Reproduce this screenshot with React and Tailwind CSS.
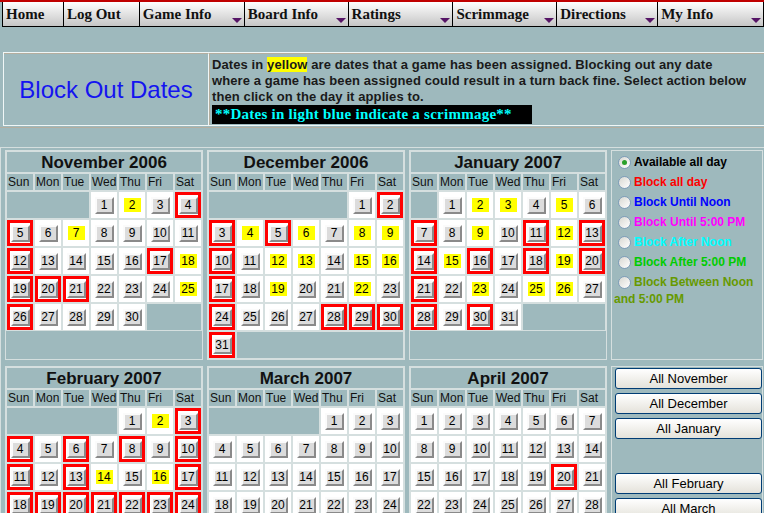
import React from "react";

// ------------------------------------------------------------
// DATA
// ------------------------------------------------------------
const NAV = [
  { label: "Home", w: "w-[61px]" },
  { label: "Log Out", w: "w-[76px]" },
  { label: "Game Info", w: "w-[105px]", drop: true },
  { label: "Board Info", w: "w-[104px]", drop: true },
  { label: "Ratings", w: "w-[105px]", drop: true },
  { label: "Scrimmage", w: "w-[104px]", drop: true },
  { label: "Directions", w: "w-[101px]", drop: true },
  { label: "My Info", w: "w-[106px]", drop: true },
];

const MONTHS_TOP = [
  {
    title: "November 2006",
    start: 3,
    days: 30,
    yellow: [2, 7, 18, 25],
    red: [4, 5, 12, 17, 19, 20, 21, 26],
  },
  {
    title: "December 2006",
    start: 5,
    days: 31,
    yellow: [4, 6, 8, 9, 12, 13, 15, 16, 19, 22],
    red: [2, 3, 5, 10, 17, 24, 28, 29, 30, 31],
  },
  {
    title: "January 2007",
    start: 1,
    days: 31,
    yellow: [2, 3, 5, 9, 12, 15, 19, 23, 25, 26],
    red: [7, 11, 13, 14, 16, 18, 20, 21, 28, 30],
  },
];

const MONTHS_BOTTOM = [
  {
    title: "February 2007",
    start: 4,
    days: 28,
    yellow: [2, 14, 16],
    red: [3, 4, 6, 8, 10, 11, 13, 17, 18, 19, 20, 21, 22, 23, 24],
  },
  { title: "March 2007", start: 4, days: 31, yellow: [], red: [] },
  { title: "April 2007", start: 0, days: 30, yellow: [], red: [20] },
];

const WEEK = ["Sun", "Mon", "Tue", "Wed", "Thu", "Fri", "Sat"];

const SPAN = {
  1: "col-span-1",
  2: "col-span-2",
  3: "col-span-3",
  4: "col-span-4",
  5: "col-span-5",
  6: "col-span-6",
};

const OPTIONS = [
  { label: "Available all day", color: "text-[#000000]", checked: true },
  { label: "Block all day", color: "text-[#ff0000]" },
  { label: "Block Until Noon", color: "text-[#0000ff]" },
  { label: "Block Until 5:00 PM", color: "text-[#ff00ff]" },
  { label: "Block After Noon", color: "text-[#00ffff]" },
  { label: "Block After 5:00 PM", color: "text-[#00cc00]" },
];

// ------------------------------------------------------------
// PIECES
// ------------------------------------------------------------
function DayCell({ d, yellow, red }) {
  return (
    <div
      className={`h-[26px] bg-white flex items-center justify-center ${
        red ? "border-[3px] border-[#ff0000]" : ""
      }`}
    >
      {yellow ? (
        <span className="w-[17px] h-[14px] bg-[#ffff00] text-[12px] leading-[14px] text-center text-black">
          {d}
        </span>
      ) : (
        <span className="w-[19px] h-[17px] bg-[#dcdcdc] border-2 border-t-[#fbfbfb] border-l-[#fbfbfb] border-r-[#8a8a8a] border-b-[#8a8a8a] text-[12px] leading-[13px] text-center text-black">
          {d}
        </span>
      )}
    </div>
  );
}

function Calendar({ title, start, days, yellow, red }) {
  const cells = [];
  if (start > 0) {
    cells.push(<div key="lead" className={`${SPAN[start]} h-[26px] bg-[#9eb9bd]`} />);
  }
  for (let d = 1; d <= days; d++) {
    cells.push(
      <DayCell key={d} d={d} yellow={yellow.includes(d)} red={red.includes(d)} />
    );
  }
  const rest = (start + days) % 7;
  if (rest > 0) {
    cells.push(<div key="tail" className={`${SPAN[7 - rest]} h-[26px] bg-[#9eb9bd]`} />);
  }

  return (
    <div className="border border-[#d5dfdf] bg-[#9eb9bd]">
      <div className="grid grid-cols-[repeat(7,26px)] gap-[2px] p-[1px] bg-[#d5dfdf]">
        <div className="col-span-7 h-[20px] bg-[#9eb9bd] text-center font-bold text-[17px] leading-[21px] text-[#111]">
          {title}
        </div>
        {WEEK.map((w) => (
          <div
            key={w}
            className="h-[16px] bg-[#9eb9bd] pl-[1px] text-[12px] leading-[16px] text-[#111] whitespace-nowrap"
          >
            {w}
          </div>
        ))}
        {cells}
      </div>
    </div>
  );
}

function Radio({ checked }) {
  return (
    <span className="inline-flex w-[13px] h-[13px] rounded-full border border-[#7f9db9] bg-gradient-to-br from-[#d8d8d2] to-white items-center justify-center shrink-0">
      {checked && <span className="w-[5px] h-[5px] rounded-full bg-[#2aa02a]" />}
    </span>
  );
}

function Btn({ children, className = "" }) {
  return (
    <div
      className={`w-[147px] h-[21px] ml-[3px] rounded-[3px] border border-[#003c74] bg-gradient-to-b from-white to-[#e4e2da] text-center text-[13px] leading-[19px] text-black ${className}`}
    >
      {children}
    </div>
  );
}

// ------------------------------------------------------------
// PAGE
// ------------------------------------------------------------
export default function App() {
  return (
    <div className="w-full h-[513px] overflow-hidden bg-[#9eb9bd] font-['Liberation_Sans',Arial,sans-serif]">
      {/* NAV */}
      <div className="border-t-2 border-[#c00000] pl-[2px]">
        <div className="flex border-l border-b border-black">
          {NAV.map((n) => (
            <div
              key={n.label}
              className={`relative ${n.w} h-[24px] border-r border-black bg-gradient-to-b from-white to-[#c6c6c6] pl-[3px] font-['Liberation_Serif',serif] font-bold text-[15px] leading-[24px] text-[#111]`}
            >
              {n.label}
              {n.drop && (
                <span className="absolute right-[2px] bottom-[3px] w-0 h-0 border-l-[5px] border-r-[5px] border-t-[5px] border-l-transparent border-r-transparent border-t-[#561566]" />
              )}
            </div>
          ))}
        </div>
      </div>

      {/* HEADER */}
      <div className="mt-[25px] ml-[3px] flex h-[74px] border-t border-l border-b border-[#f0f7f7]">
        <div className="w-[205px] border-t border-[#b5ae9f] border-r border-r-[#f0f7f7] flex items-center justify-center text-[24px] text-[#1414f0]">
          Block Out Dates
        </div>
        <div className="flex-1 border-t border-l border-[#b5ae9f] pl-[2px] pt-[3px]">
          <p className="w-[542px] text-[13px] font-bold tracking-[0.1px] leading-[16px] text-[#1a1a1a]">
            Dates in <span className="bg-[#ffff00]">yellow</span> are dates that a game has been
            assigned. Blocking out any date where a game has been assigned could result in a turn
            back fine. Select action below then click on the day it applies to.
          </p>
          <div className="w-[320px] h-[19px] bg-black pl-[3px] font-['Liberation_Serif',serif] font-bold text-[15px] tracking-[0.25px] leading-[19px] text-[#00ffff]">
            **Dates in light blue indicate a scrimmage**
          </div>
        </div>
      </div>
      <div className="mt-px h-px bg-[#b5ae9f]" />

      {/* CALENDARS */}
      <div className="mt-[19px] border-t border-l border-[#d5dfdf] pt-[2px] pl-[4px] grid grid-cols-[198px_198px_198px_152px] gap-x-[4px] gap-y-[6px]">
        {MONTHS_TOP.map((m) => (
          <Calendar key={m.title} {...m} />
        ))}

        {/* ACTION OPTIONS */}
        <div className="border border-[#d5dfdf] pt-[1px] pl-[1px] text-[12px] font-bold">
          {OPTIONS.map((o) => (
            <div key={o.label} className={`flex items-center h-[20px] pl-[5px] gap-[3px] ${o.color}`}>
              <Radio checked={o.checked} />
              <span className="whitespace-nowrap">{o.label}</span>
            </div>
          ))}
          <div className="text-[#669900]">
            <div className="flex items-center h-[20px] pl-[5px] gap-[3px]">
              <Radio />
              <span className="whitespace-nowrap">Block Between Noon</span>
            </div>
            <div className="leading-[15px] pl-[1px]">and 5:00 PM</div>
          </div>
        </div>

        {MONTHS_BOTTOM.map((m) => (
          <Calendar key={m.title} {...m} />
        ))}

        {/* MONTH BUTTONS */}
        <div className="border border-[#d5dfdf] pt-[1px]">
          <Btn>All November</Btn>
          <Btn className="mt-[4px]">All December</Btn>
          <Btn className="mt-[4px]">All January</Btn>
          <Btn className="mt-[34px]">All February</Btn>
          <Btn className="mt-[4px]">All March</Btn>
        </div>
      </div>
    </div>
  );
}
